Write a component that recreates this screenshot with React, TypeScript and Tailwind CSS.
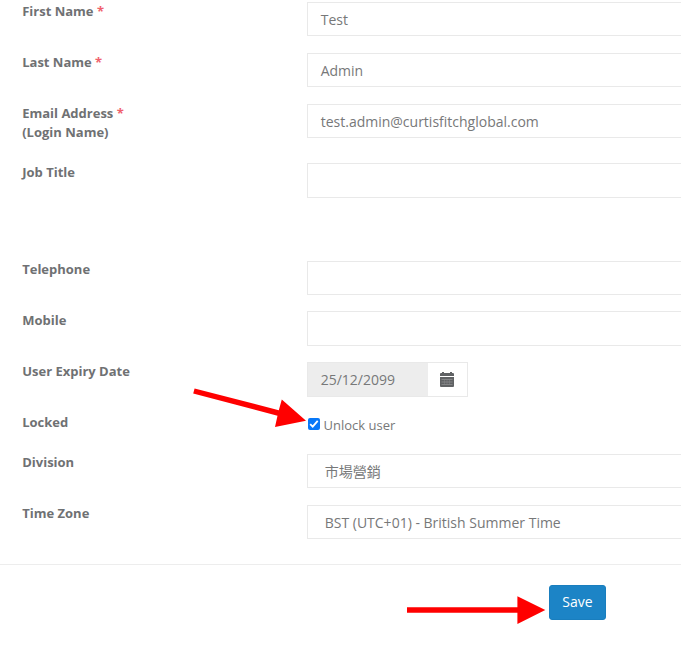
import type { ReactNode } from "react";

function Row({ label, required, note, className, labelClass = "", children }: {
  label: string;
  required?: boolean;
  note?: string;
  className: string;
  labelClass?: string;
  children: ReactNode;
}) {
  return (
    <div className={`flex shrink-0 items-start ${className}`}>
      <label className={`block w-[307px] shrink-0 pl-[22.2px] text-[13px] leading-[19px] font-bold text-[#6f7173] ${labelClass}`}>
        {label}
        {required && <span className="text-[#f0616d]"> *</span>}
        {note && <span className="block">{note}</span>}
      </label>
      {children}
    </div>
  );
}

function Field({ value = "", className = "h-[34px] pl-[12.7px]" }: { value?: string; className?: string }) {
  return (
    <div className={`w-[400px] shrink-0 border border-[#e9e9e9] bg-white text-[14px] leading-[34px] whitespace-nowrap text-[#777879] ${className}`}>
      {value}
    </div>
  );
}

function CalendarIcon() {
  return (
    <svg width="14" height="15" viewBox="0 0 14 15" fill="none">
      <path d="M0 4V2.2Q0 1 1 1H2V0H4V1H10V0H12V1H13Q14 1 14 2.2V4Z" fill="#606264" />
      <path d="M0 5H14V14Q14 15 13 15H1Q0 15 0 14Z" fill="#606264" />
      <path d="M1.5 7.5H12.5M1.5 10H12.5M1.5 12.5H12.5" stroke="#929394" strokeWidth=".7" />
      <path d="M4.5 7V13M7 7V13M9.5 7V13" stroke="#858788" strokeWidth=".5" />
    </svg>
  );
}

export default function App() {
  return (
    <main className="relative flex h-[646px] w-[681px] flex-col overflow-hidden bg-white pt-[2px] font-['Open_Sans','Noto_Sans_CJK_TC',sans-serif]">
      <Row label="First Name" required className="h-[51px]"><Field value="Test" /></Row>
      <Row label="Last Name" required className="h-[51px]"><Field value="Admin" /></Row>
      <Row label="Email Address" required note="(Login Name)" className="h-[59px]"><Field value="test.admin@curtisfitchglobal.com" /></Row>
      <Row label="Job Title" className="h-[98px]"><Field className="h-[35px]" /></Row>
      <Row label="Telephone" className="h-[50px]" labelClass="-mt-px"><Field /></Row>
      <Row label="Mobile" className="h-[51px]"><Field className="h-[35px]" /></Row>
      <Row label="User Expiry Date" className="h-[51px]">
        <div className="flex h-[35px] w-[161px] border border-[#e9e9e9]">
          <div className="w-[120px] bg-[#ededed] pl-[12.7px] text-[14px] leading-[34px] text-[#777879]">25/12/2099</div>
          <div className="flex flex-1 items-center justify-center pr-px pb-px"><CalendarIcon /></div>
        </div>
      </Row>
      <Row label="Locked" className="h-[41px]">
        <div className="flex pt-[3px] pl-px">
          <span className="mt-[2px] flex h-3 w-3 items-center justify-center rounded-[2px] bg-[#0878f8]">
            <svg width="10" height="10" viewBox="0 0 10 10" fill="none">
              <path d="M1.2 5.2L3.7 7.7L8.7 1.8" stroke="white" strokeWidth="1.8" />
            </svg>
          </span>
          <span className="ml-[3.5px] text-[13px] leading-[19px] text-[#777879]">Unlock user</span>
        </div>
      </Row>
      <Row label="Division" className="h-[51px]" labelClass="-mt-px"><Field value="市場營銷" className="h-[34px] pl-[16.7px]" /></Row>
      <Row label="Time Zone" className="h-[59px]" labelClass="-mt-px"><Field value="BST (UTC+01) - British Summer Time" className="h-[34px] pl-[16.7px]" /></Row>
      <div className="flex h-[82px] shrink-0 items-start border-t border-[#ededed] pt-5 pl-[549px]">
        <button className="flex h-[35px] w-[57px] items-start justify-center rounded-[3px] border border-[#197ebe] bg-[#1c84c6] text-[14px] leading-[32px] text-white">Save</button>
      </div>
      <svg className="pointer-events-none absolute inset-0" width="681" height="646" viewBox="0 0 681 646">
        <g fill="#ff0000">
          <path d="M194.6 388.4L278.8 410.2L281.8 399.5L306 420.7L275 427L277.5 415.8L193.2 393.4Z" />
          <path d="M407 607.3H517.4V596.2L545.3 610L517.4 624V612.7H407Z" />
        </g>
      </svg>
    </main>
  );
}
